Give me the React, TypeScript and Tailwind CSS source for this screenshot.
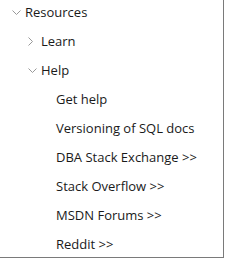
import React from "react";

const Down = () => (
  <svg width="9" height="5" viewBox="0 0 9 5" className="shrink-0">
    <path d="M0.5 0.5 L4.5 4.5 L8.5 0.5" fill="none" stroke="#999999" strokeWidth="1" />
  </svg>
);
const Right = () => (
  <svg width="5" height="9" viewBox="0 0 5 9" className="shrink-0">
    <path d="M0.5 0.5 L4.5 4.5 L0.5 8.5" fill="none" stroke="#999999" strokeWidth="1" />
  </svg>
);

const links = [
  "Get help",
  "Versioning of SQL docs",
  "DBA Stack Exchange >>",
  "Stack Overflow >>",
  "MSDN Forums >>",
  "Reddit >>",
];

export default function App() {
  return (
    <div className="w-[226px] h-[260px] bg-white">
      <div
        className="w-[224px] h-[258px] border-r border-b border-[#7a7a7a] text-[13px] leading-[29px] text-[#1a1a1a] flex flex-col"
        style={{ fontFamily: '"Open Sans", "Noto Sans", sans-serif' }}
      >
        <div className="flex items-center h-[29px] -mt-[2px]">
          <div className="w-[25px] flex justify-end pr-[4px]"><Down /></div>
          <span>Resources</span>
        </div>
        <div className="flex items-center h-[29px]">
          <div className="w-[41px] flex justify-end pr-[8px]"><Right /></div>
          <span>Learn</span>
        </div>
        <div className="flex items-center h-[29px]">
          <div className="w-[41px] flex justify-end pr-[4px]"><Down /></div>
          <span>Help</span>
        </div>
        {links.map((l) => (
          <div key={l} className="flex items-center h-[29px] pl-[56px]">
            <span>{l}</span>
          </div>
        ))}
      </div>
    </div>
  );
}
